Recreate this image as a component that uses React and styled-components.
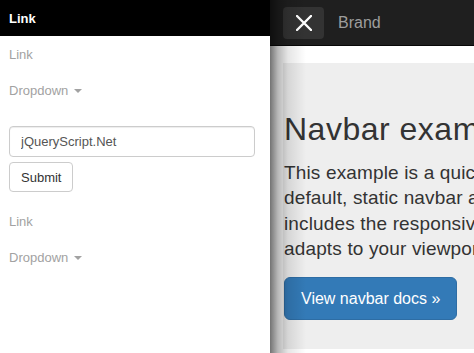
import styled, { createGlobalStyle } from 'styled-components';

const GlobalStyle = createGlobalStyle`
  html, body {
    margin: 0;
    padding: 0;
    background: #fff;
    overflow: hidden;
  }
  body {
    font-family: "Liberation Sans", Arial, sans-serif;
  }
`;

const Screen = styled.div`
  display: flex;
  width: 474px;
  height: 353px;
  overflow: hidden;
`;

/////////////////////////// Sidebar ///////////////////////////

const Sidebar = styled.aside`
  flex: 0 0 270px;
  display: flex;
  flex-direction: column;
  background: #fff;
`;

const NavItem = styled.a`
  display: flex;
  align-items: center;
  height: 36px;
  padding: 0 9px;
  font-size: 13px;
  text-decoration: none;
  color: ${(p) => (p.active ? '#fff' : '#a2a2a2')};
  background: ${(p) => (p.active ? '#000' : 'transparent')};
  font-weight: ${(p) => (p.active ? 'bold' : 'normal')};
`;

const Caret = styled.span`
  display: inline-block;
  margin-left: 6px;
  margin-top: 2px;
  border-top: 4px solid #a2a2a2;
  border-left: 4px solid transparent;
  border-right: 4px solid transparent;
`;

const SearchForm = styled.form`
  display: flex;
  flex-direction: column;
  align-items: flex-start;
  gap: 5px;
  padding: 18px 9px 11px;
`;

const Input = styled.input`
  box-sizing: border-box;
  width: 246px;
  height: 31px;
  padding: 0 11px;
  border: 1px solid #ccc;
  border-radius: 4px;
  box-shadow: inset 0 1px 1px rgba(0, 0, 0, 0.075);
  font-family: "Liberation Sans", Arial, sans-serif;
  font-size: 13px;
  color: #555;
  outline: none;
`;

const SubmitButton = styled.button`
  box-sizing: border-box;
  height: 30px;
  padding: 0 11px;
  border: 1px solid #ccc;
  border-radius: 4px;
  background: #fff;
  font-family: "Liberation Sans", Arial, sans-serif;
  font-size: 13px;
  color: #333;
`;

/////////////////////////// Main ///////////////////////////

const Main = styled.main`
  position: relative;
  flex: 0 0 700px;
  background: #fff;

  &::after {
    content: '';
    position: absolute;
    top: 0;
    left: 0;
    bottom: 0;
    width: 36px;
    pointer-events: none;
    background: linear-gradient(
      to right,
      rgba(0, 0, 0, 0.55),
      rgba(0, 0, 0, 0.28) 8px,
      rgba(0, 0, 0, 0.1) 18px,
      rgba(0, 0, 0, 0) 36px
    );
  }
`;

const Navbar = styled.nav`
  display: flex;
  align-items: center;
  height: 45px;
  padding-left: 13px;
  background: #1f1f1f;
  border-bottom: 1px solid #080808;
`;

const Toggle = styled.button`
  display: flex;
  align-items: center;
  justify-content: center;
  width: 41px;
  height: 32px;
  padding: 0;
  border: none;
  border-radius: 4px;
  background: #333;
`;

const Brand = styled.a`
  margin-left: 14px;
  font-size: 16px;
  color: #9d9d9d;
  text-decoration: none;
`;

const Jumbotron = styled.section`
  margin: 17px 0 0 13px;
  padding: 49px 0 29px 1px;
  background: #eee;
  color: #333;
`;

const Title = styled.h1`
  margin: 0;
  font-size: 32px;
  line-height: 34px;
  letter-spacing: 0.5px;
  font-weight: normal;
  white-space: nowrap;
`;

const Lead = styled.p`
  margin: 14px 0 0;
  font-size: 19px;
  line-height: 25.3px;
  letter-spacing: 0.15px;
  white-space: nowrap;
`;

const PrimaryButton = styled.a`
  display: inline-flex;
  align-items: center;
  box-sizing: border-box;
  height: 43px;
  margin-top: 16px;
  padding: 0 16px;
  border: 1px solid #2e6da4;
  border-radius: 6px;
  background: #337ab7;
  color: #fff;
  font-size: 16px;
  text-decoration: none;
`;

const CloseIcon = () => (
  <svg width="16" height="16" viewBox="0 0 16 16">
    <path d="M1 1 L15 15 M15 1 L1 15" stroke="#fff" strokeWidth="2.4" strokeLinecap="round" />
  </svg>
);

const App = () => {
  return <>
    <GlobalStyle />
    <Screen>
      <Sidebar>
        <NavItem active>Link</NavItem>
        <NavItem>Link</NavItem>
        <NavItem>Dropdown <Caret /></NavItem>
        <SearchForm onSubmit={(e) => e.preventDefault()}>
          <Input type="text" defaultValue="jQueryScript.Net" />
          <SubmitButton type="submit">Submit</SubmitButton>
        </SearchForm>
        <NavItem>Link</NavItem>
        <NavItem>Dropdown <Caret /></NavItem>
      </Sidebar>

      <Main>
        <Navbar>
          <Toggle><CloseIcon /></Toggle>
          <Brand>Brand</Brand>
        </Navbar>
        <Jumbotron>
          <Title>Navbar example</Title>
          <Lead>
            This example is a quick exercise to illustrate how the<br />
            default, static navbar and fixed to top navbar work. It<br />
            includes the responsive CSS and HTML, so it also<br />
            adapts to your viewport and device.
          </Lead>
          <PrimaryButton>View navbar docs &raquo;</PrimaryButton>
        </Jumbotron>
      </Main>
    </Screen>
  </>
}

export default App
